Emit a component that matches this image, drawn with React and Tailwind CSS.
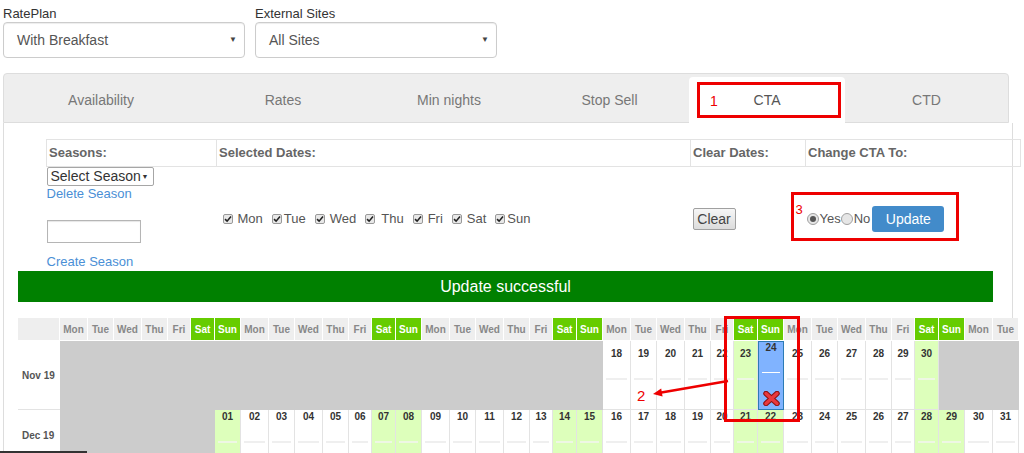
const DAYS = ["Mon", "Tue", "Wed", "Thu", "Fri", "Sat", "Sun"];
const COLS = Array.from({ length: 37 }, (_, i) => i);

const TABS = [
  { label: "Availability", w: "w-[194px]" },
  { label: "Rates", w: "w-[170px]" },
  { label: "Min nights", w: "w-[162px]" },
  { label: "Stop Sell", w: "w-[159px]" },
  { label: "CTA", w: "w-[156px]", active: true },
  { label: "CTD", w: "w-[163px]" },
];

// checkbox label + gap between box and text
const WEEKDAYS = [
  { d: "Mon", ml: "ml-[5px]" },
  { d: "Tue", ml: "ml-[2px]" },
  { d: "Wed", ml: "ml-[5px]" },
  { d: "Thu", ml: "ml-[6px]" },
  { d: "Fri", ml: "ml-[5px]" },
  { d: "Sat", ml: "ml-[5px]" },
  { d: "Sun", ml: "ml-[2px]" },
];

function Field({ label, value }) {
  return (
    <div className="w-[242px]">
      <div className="text-[13px] leading-[17px] text-[#333]">{label}</div>
      <div className="flex h-[36px] items-center justify-between rounded-[4px] border border-[#ccc] pl-[13px] pr-[7px] text-[14px] text-[#555] shadow-[inset_0_1px_1px_rgba(0,0,0,0.075)]">
        <span>{value}</span>
        <span className="text-[8px] text-[#444]">▼</span>
      </div>
    </div>
  );
}

function CheckBox() {
  return (
    <span className="flex h-[10px] w-[10px] items-center justify-center rounded-[2px] border border-[#999] bg-[#e8e8e8]">
      <svg width="8" height="8" viewBox="0 0 8 8">
        <path d="M1 4.2 L3.1 6.2 L7 1.6" fill="none" stroke="#222" strokeWidth="1.6" />
      </svg>
    </span>
  );
}

function Radio({ checked }) {
  return (
    <span className="flex h-[12px] w-[12px] items-center justify-center rounded-full border border-[#a0a0a0] bg-[#e6e6e6]">
      {checked && <span className="h-[6px] w-[6px] rounded-full bg-[#555]" />}
    </span>
  );
}

function RedX() {
  return (
    <svg width="17" height="15" viewBox="0 0 17 15">
      <path d="M3 2.5 L14 12.5 M14 2.5 L3 12.5" stroke="#8a1010" strokeWidth="5.5" strokeLinecap="round" />
      <path d="M3 2.5 L14 12.5 M14 2.5 L3 12.5" stroke="#e8383d" strokeWidth="3.4" strokeLinecap="round" />
    </svg>
  );
}

function DayCell({ day, weekend, nov, selected }) {
  if (!day) return <div className="bg-[#cccccc]" />;
  const num = String(day).padStart(2, "0");
  if (selected) {
    return (
      <div className="border border-[#2d7bb5] bg-[#80b3ff]">
        <div className="mx-[3px] h-[31px] border-b border-white text-center text-[10px] font-bold leading-[12px] text-[#333]">
          {num}
        </div>
        <div className="mt-[18px] flex justify-center">
          <RedX />
        </div>
      </div>
    );
  }
  return (
    <div
      className={`border-r border-b border-[#e3e3e3] ${weekend ? "bg-[#ddffbb]" : "bg-white"} ${nov ? "pt-[6px]" : "pt-0"}`}
    >
      <div
        className={`mx-[3px] h-[33px] border-b-2 pt-px text-center text-[10px] font-bold leading-[12px] text-[#333] ${weekend ? "border-[#eef7e4]" : "border-[#efefef]"}`}
      >
        {num}
      </div>
    </div>
  );
}

function Calendar() {
  return (
    <div className="relative ml-[14px] mt-[16px]">
      <div className="grid grid-cols-[42px_repeat(5,28px_26px_28px_26px_23px_24px_26px)_28px_26px] grid-rows-[23px_69px_52px]">
        <div className="border-r border-b border-white bg-[#eeeeee]" />
        {COLS.map((c) => {
          const wk = c % 7 >= 5;
          return (
            <div
              key={"h" + c}
              className={`flex items-center justify-center border-r border-b border-white text-[10px] font-bold ${wk ? "bg-[#66cc00] text-white" : "bg-[#eeeeee] text-[#888]"}`}
            >
              {DAYS[c % 7]}
            </div>
          );
        })}

        <div className="flex items-center border-b border-[#e3e3e3] bg-white pl-[4px] text-[10px] font-bold text-[#555]">
          Nov 19
        </div>
        {COLS.map((c) => {
          const d = c - 3;
          const show = d >= 18 && d <= 30;
          return (
            <DayCell
              key={"n" + c}
              day={show ? d : null}
              weekend={c % 7 >= 5}
              nov
              selected={d === 24}
            />
          );
        })}

        <div className="flex items-center border-b border-[#e3e3e3] bg-white pl-[4px] text-[10px] font-bold text-[#555]">
          Dec 19
        </div>
        {COLS.map((c) => {
          const d = c - 5;
          const show = d >= 1 && d <= 31;
          return <DayCell key={"d" + c} day={show ? d : null} weekend={c % 7 >= 5} />;
        })}
      </div>

      {/* annotation 2 */}
      <div className="absolute left-[706px] top-[-2px] h-[106px] w-[76px] border-[3px] border-[#ee0000]" />
      <svg className="absolute left-[612px] top-[57px]" width="100" height="25" viewBox="0 0 100 25">
        <line x1="30" y1="17.8" x2="98" y2="6" stroke="#ee0000" strokeWidth="2.5" />
        <polygon points="23,19 32.6,21.6 31.2,13.4" fill="#ee0000" />
      </svg>
      <div className="absolute left-[619px] top-[69px] text-[15px] leading-[17px] text-[#ee0000]">2</div>
    </div>
  );
}

export default function App() {
  return (
    <div className="relative h-[453px] w-[1024px] overflow-hidden bg-white font-['Liberation_Sans',Arial,sans-serif] text-[#333]">
      <div className="flex gap-[10px] pl-[3px] pt-[5px]">
        <Field label="RatePlan" value="With Breakfast" />
        <Field label="External Sites" value="All Sites" />
      </div>

      <div className="ml-[3px] mt-[15px] w-[1006px]">
        {/* tabs */}
        <div className="flex h-[50px] items-end rounded-t-[4px] border border-[#dddddd] bg-[#eeeeee]">
          {TABS.map((t) =>
            t.active ? (
              <div
                key={t.label}
                className={`relative -mb-px flex h-[46px] items-center justify-center rounded-t-[4px] bg-white text-[14px] text-[#555] ${t.w}`}
              >
                CTA
                <div className="absolute left-[8px] top-[5px] h-[36px] w-[144px] border-[3px] border-[#ee0000]" />
                <span className="absolute left-[21px] top-[14px] text-[14px] text-[#ee0000]">1</span>
              </div>
            ) : (
              <div
                key={t.label}
                className={`flex h-[48px] items-center justify-center pt-[4px] text-[14px] text-[#777] ${t.w}`}
              >
                {t.label}
              </div>
            )
          )}
        </div>

        {/* tab body */}
        <div className="w-[1010px] border-l border-r border-[#dddddd] pt-[16px]">
          <table className="ml-[42px] w-[974px] table-fixed border-collapse">
            <colgroup>
              <col className="w-[170px]" />
              <col className="w-[474px]" />
              <col className="w-[115px]" />
              <col className="w-[215px]" />
            </colgroup>
            <thead>
              <tr className="h-[27px] text-left text-[13px] font-bold text-[#666]">
                <th className="border border-[#e3e3e3] pl-[2px]">Seasons:</th>
                <th className="border border-[#e3e3e3] pl-[2px]">Selected Dates:</th>
                <th className="border border-[#e3e3e3] pl-[2px]">Clear Dates:</th>
                <th className="border border-[#e3e3e3] pl-[2px]">Change CTA To:</th>
              </tr>
            </thead>
            <tbody>
              <tr>
                <td className="align-top">
                  <div className="flex flex-col items-start pb-[2px]">
                    <div className="flex h-[19px] w-[107px] items-center justify-between whitespace-nowrap rounded-[2px] border border-[#a6a6a6] pl-[3px] pr-[4px] text-[14px] leading-[17px] text-[#333]">
                      <span>Select Season</span>
                      <span className="text-[7px]">▼</span>
                    </div>
                    <span className="text-[13px] leading-[15px] text-[#4a8fd6]">Delete Season</span>
                    <div className="mt-[19px] h-[23px] w-[94px] border border-[#b5b5b5] shadow-[inset_0_1px_1px_rgba(0,0,0,0.1)]" />
                    <span className="mt-[11px] text-[13px] leading-[15px] text-[#4a8fd6]">Create Season</span>
                  </div>
                </td>
                <td className="align-middle">
                  <div className="flex items-center gap-[9px] pl-[6px] text-[13px] text-[#555]">
                    {WEEKDAYS.map((w) => (
                      <div key={w.d} className="flex items-center">
                        <CheckBox />
                        <span className={w.ml}>{w.d}</span>
                      </div>
                    ))}
                  </div>
                </td>
                <td className="align-middle">
                  <div className="pl-[2px]">
                    <div className="flex h-[22px] w-[43px] items-center justify-center rounded-[2px] border border-[#a0a0a0] bg-gradient-to-b from-[#f6f6f6] to-[#dcdcdc] text-[14px] text-[#444]">
                      Clear
                    </div>
                  </div>
                </td>
                <td className="align-middle">
                  <div className="relative ml-px flex h-[26px] items-center text-[13px] text-[#555]">
                    <Radio checked />
                    <span className="ml-px">Yes</span>
                    <Radio />
                    <span className="ml-px">No</span>
                    <div className="ml-[2px] flex h-[26px] w-[72px] items-center justify-center rounded-[3px] bg-[#428bca] text-[14px] text-white">
                      Update
                    </div>
                    <div className="absolute left-[-16px] top-[-14px] h-[49px] w-[168px] border-[3px] border-[#ee0000]" />
                    <span className="absolute left-[-11px] top-[-6px] text-[13px] text-[#ee0000]">3</span>
                  </div>
                </td>
              </tr>
            </tbody>
          </table>

          <div className="ml-[14px] flex h-[31px] w-[975px] items-center justify-center bg-[#008000] text-[16px] text-white">
            Update successful
          </div>

          <Calendar />
        </div>
      </div>

      <div className="absolute bottom-0 left-0 h-[2px] w-[87px] bg-[#333]" />
    </div>
  );
}
